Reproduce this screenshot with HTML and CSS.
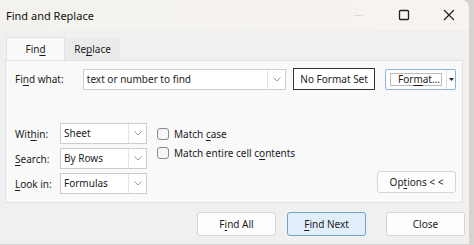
FILE: index.html
```html
<!DOCTYPE html>
<html lang="en">
<head>
  <meta charset="UTF-8" />
  <title>Find and Replace</title>
  <link rel="stylesheet" href="styles.css">
</head>
<body>
  <div class="window">
    <div class="titlebar">
      <span class="title">Find and Replace</span>
      <div class="caption">
        <span class="cap-min"></span>
        <svg class="cap-max" width="12" height="12" viewBox="0 0 12 12"><rect x="1.5" y="1.5" width="9" height="9" rx="1" fill="none" stroke="#222" stroke-width="1.3"/></svg>
        <svg class="cap-close" width="12" height="12" viewBox="0 0 12 12"><path d="M1 1 L11 11 M11 1 L1 11" stroke="#222" stroke-width="1.2"/></svg>
      </div>
    </div>

    <div class="content">
      <div class="tabs">
        <div class="tab active"><span>Fin<u>d</u></span></div>
        <div class="tab"><span>Re<u>p</u>lace</span></div>
      </div>

      <div class="panel">
        <div class="find-row">
          <label class="lbl">Fi<u>n</u>d what:</label>
          <div class="combo find-combo">
            <span class="combo-text">text or number to find</span>
            <span class="combo-arrow"><svg width="8" height="5" viewBox="0 0 8 5"><path d="M0.5 0.5 L4 4 L7.5 0.5" fill="none" stroke="#999" stroke-width="1"/></svg></span>
          </div>
          <div class="format-box">No Format Set</div>
          <div class="split-btn">
            <span class="split-main"><span class="focus-rect"><span>For<u>m</u>at...</span></span></span>
            <span class="split-drop"><svg width="5" height="3" viewBox="0 0 5 3"><path d="M0 0 H5 L2.5 3 Z" fill="#222"/></svg></span>
          </div>
        </div>

        <div class="options">
          <div class="fields">
            <label class="lbl">Wit<u>h</u>in:</label>
            <div class="combo small-combo">
              <span class="combo-text">Sheet</span>
              <span class="combo-arrow"><svg width="8" height="5" viewBox="0 0 8 5"><path d="M0.5 0.5 L4 4 L7.5 0.5" fill="none" stroke="#999" stroke-width="1"/></svg></span>
            </div>
            <label class="lbl"><u>S</u>earch:</label>
            <div class="combo small-combo">
              <span class="combo-text">By Rows</span>
              <span class="combo-arrow"><svg width="8" height="5" viewBox="0 0 8 5"><path d="M0.5 0.5 L4 4 L7.5 0.5" fill="none" stroke="#999" stroke-width="1"/></svg></span>
            </div>
            <label class="lbl"><u>L</u>ook in:</label>
            <div class="combo small-combo">
              <span class="combo-text">Formulas</span>
              <span class="combo-arrow"><svg width="8" height="5" viewBox="0 0 8 5"><path d="M0.5 0.5 L4 4 L7.5 0.5" fill="none" stroke="#999" stroke-width="1"/></svg></span>
            </div>
          </div>

          <div class="checks">
            <div class="check"><span class="box"></span><span>Match <u>c</u>ase</span></div>
            <div class="check"><span class="box"></span><span>Match entire cell c<u>o</u>ntents</span></div>
          </div>

          <button class="btn options-btn">Op<u>t</u>ions &lt; &lt;</button>
        </div>
      </div>

      <div class="footer">
        <button class="btn">F<u>i</u>nd All</button>
        <button class="btn primary"><u>F</u>ind Next</button>
        <button class="btn close-btn">Close</button>
      </div>
    </div>
  </div>
</body>
</html>
```

FILE: styles.css
```css
body {
  margin: 0;
  background-color: #d6d3d0;
  font-family: 'Noto Sans', sans-serif;
  font-size: 10px;
  color: #1b1b1b;
}

u {
  text-decoration-thickness: 1px;
  text-underline-offset: 2px;
}

.window {
  width: 469px;
  height: 244px;
  background-color: #f0f0f0;
  border-top-right-radius: 8px;
  overflow: hidden;
}

.titlebar {
  height: 30px;
  display: flex;
  align-items: center;
  justify-content: space-between;
  background: linear-gradient(to right, #f3f2ee, #f8f4ef);
  padding-left: 6px;
}

.title {
  font-size: 11px;
  color: #111;
}

.caption {
  display: flex;
  align-items: center;
}

.cap-min {
  width: 9px;
  height: 1px;
  background-color: #ddd;
  margin-right: 35px;
}

.cap-max {
  margin-right: 33px;
}

.cap-close {
  margin-right: 14px;
}

.content {
  padding: 7px 6px 0 5px;
}

.tabs {
  display: flex;
  height: 23px;
  padding-left: 1px;
}

.tab {
  display: flex;
  align-items: center;
  justify-content: center;
  background-color: #ebebeb;
  width: 55px;
  margin-top: 1px;
}

.tab.active {
  background-color: #f9f9f9;
  width: 57px;
  margin-top: 0;
  border: 1px solid #e2e2e2;
  border-bottom: none;
}

.panel {
  background-color: #f9f9f9;
  border: 1px solid #e2e2e2;
  box-sizing: border-box;
  height: 143px;
  padding: 7px 6px 0 9px;
}

.find-row {
  display: flex;
  align-items: center;
}

.lbl {
  white-space: nowrap;
}

.find-row .lbl {
  width: 68px;
}

.combo {
  display: flex;
  background-color: #fff;
  border: 1px solid #cdcdcd;
  box-sizing: border-box;
  height: 21px;
}

.combo-text {
  flex: 1;
  padding-left: 3px;
  line-height: 19px;
}

.combo-arrow {
  width: 17px;
  border-left: 1px solid #e4e4e4;
  display: flex;
  align-items: center;
  justify-content: center;
}

.find-combo {
  width: 204px;
}

.format-box {
  margin-left: 7px;
  width: 82px;
  height: 22px;
  border: 1px solid #333;
  box-sizing: border-box;
  background-color: #fff;
  display: flex;
  align-items: center;
  justify-content: center;
  white-space: nowrap;
}

.split-btn {
  margin-left: 10px;
  height: 21px;
  display: flex;
  border: 1px solid #8db3e2;
  border-radius: 2px;
  background-color: #fff;
  box-sizing: border-box;
}

.split-main {
  width: 60px;
  display: flex;
  align-items: center;
  padding-left: 4px;
  box-sizing: border-box;
}

.focus-rect {
  width: 52px;
  height: 13px;
  border: 1px solid #bbb;
  box-sizing: border-box;
  display: flex;
  align-items: center;
  justify-content: flex-end;
  padding-right: 1px;
  white-space: nowrap;
}

.split-drop {
  width: 8px;
  border-left: 1px solid #ddd;
  display: flex;
  align-items: center;
  justify-content: center;
}

.options {
  display: flex;
  margin-top: 33px;
}

.fields {
  display: grid;
  grid-template-columns: 45px 87px;
  row-gap: 4px;
  align-items: center;
}

.small-combo {
  width: 87px;
}

.checks {
  margin-left: 10px;
  margin-top: 3px;
  display: flex;
  flex-direction: column;
  gap: 3px;
}

.check {
  display: flex;
  align-items: center;
  height: 16px;
}

.box {
  width: 12px;
  height: 12px;
  border: 1px solid #8a8a8a;
  border-radius: 3px;
  box-sizing: border-box;
  background-color: #f6f6f6;
  margin-right: 5px;
}

.btn {
  font-family: inherit;
  font-size: 10px;
  color: #1b1b1b;
  background-color: #fdfdfd;
  border: 1px solid #d5d5d5;
  border-radius: 3px;
  width: 79px;
  height: 24px;
  padding: 0;
}

.options-btn {
  margin-left: auto;
  align-self: flex-end;
  height: 22px;
  margin-bottom: 1px;
}

.footer {
  display: flex;
  justify-content: flex-end;
  padding-top: 9px;
  gap: 11px;
  margin-right: -2px;
}

.btn.primary {
  background-color: #e2eefa;
  border-color: #6fa0d8;
}

.close-btn {
  margin-left: 9px;
}
```
